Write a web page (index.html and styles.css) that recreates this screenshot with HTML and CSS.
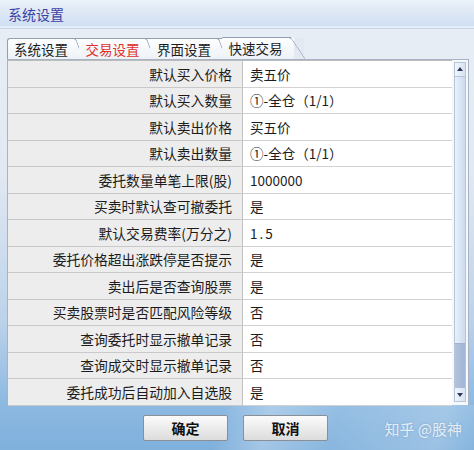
FILE: index.html
```html
<!DOCTYPE html>
<html lang="zh-CN">

<head>
    <meta charset="UTF-8">
    <title>系统设置</title>
    <link rel="stylesheet" href="styles.css">
</head>

<body>
    <div class="titlebar">系统设置</div>

    <div class="tabbar">
        <div class="tab first">系统设置</div>
        <div class="tab active">交易设置</div>
        <div class="tab">界面设置</div>
        <div class="tab last">快速交易</div>
    </div>

    <div class="sheet">
        <div class="grid">
            <div class="label">默认买入价格</div>
            <div class="value">卖五价</div>
            <div class="label">默认买入数量</div>
            <div class="value">①-全仓（1/1）</div>
            <div class="label">默认卖出价格</div>
            <div class="value">买五价</div>
            <div class="label">默认卖出数量</div>
            <div class="value">①-全仓（1/1）</div>
            <div class="label">委托数量单笔上限(股)</div>
            <div class="value">1000000</div>
            <div class="label">买卖时默认查可撤委托</div>
            <div class="value">是</div>
            <div class="label">默认交易费率(万分之)</div>
            <div class="value num">1.5</div>
            <div class="label">委托价格超出涨跌停是否提示</div>
            <div class="value">是</div>
            <div class="label">卖出后是否查询股票</div>
            <div class="value">是</div>
            <div class="label">买卖股票时是否匹配风险等级</div>
            <div class="value">否</div>
            <div class="label">查询委托时显示撤单记录</div>
            <div class="value">否</div>
            <div class="label">查询成交时显示撤单记录</div>
            <div class="value">否</div>
            <div class="label">委托成功后自动加入自选股</div>
            <div class="value">是</div>
        </div>

        <div class="scrollbar">
            <div class="arrow up"></div>
            <div class="thumb"></div>
            <div class="track"></div>
            <div class="arrow down"></div>
        </div>
    </div>

    <div class="footer">
        <button class="btn">确定</button>
        <button class="btn">取消</button>
        <span class="watermark">知乎 @股神</span>
    </div>
</body>

</html>
```

FILE: styles.css
```css
* {
    box-sizing: border-box;
}

body {
    position: relative;
    width: 474px;
    height: 450px;
    margin: 0;
    overflow: hidden;
    font-family: "Noto Sans CJK SC", sans-serif;
    color: #1c1c1c;
    background: linear-gradient(180deg, #e8eef5 0, #e2e9f2 170px, #bcd2ea 320px, #8cb9e1 405px, #7fb0dc 450px);
}

/* window caption */
.titlebar {
    display: flex;
    align-items: center;
    height: 29px;
    padding-left: 8px;
    font-size: 14px;
    color: #3a42a6;
    background: linear-gradient(180deg, #ebf2fa 0%, #dce7f5 50%, #d0e0f2 90%, #eef4fa 100%);
    border-bottom: 1px solid #c6d3e2;
}

/* tab strip */
.tabbar {
    display: flex;
    align-items: flex-end;
    height: 30px;
    padding-left: 7px;
}

.tab {
    position: relative;
    width: 71.5px;
    height: 21px;
    padding-left: 7px;
    font-size: 13.5px;
    line-height: 20px;
    white-space: nowrap;
    border-top: 1px solid #939fb1;
    background: linear-gradient(180deg, #fdfeff, #eef2f7);
}

/* slanted right edge of each tab, only the outline */
.tab::after {
    content: "";
    position: absolute;
    top: -1px;
    bottom: 0;
    right: 3px;
    width: 6px;
    border-top: 1px solid #939fb1;
    border-right: 1px solid #939fb1;
    border-top-right-radius: 3px;
    transform: skewX(20deg);
    transform-origin: top left;
}

.tab.first {
    padding-left: 6px;
    border-left: 1px solid #939fb1;
    border-top-left-radius: 3px;
}

.tab.active {
    color: #e0302c;
}

.tab.last {
    width: 82px;
    background: linear-gradient(90deg, rgba(238, 242, 247, 0) 72px, #e2e9f2 72px), linear-gradient(180deg, #fdfeff, #eef2f7);
    border-top: none;
}

.tab.last::before {
    content: "";
    position: absolute;
    top: -1px;
    left: 0;
    width: 69px;
    border-top: 1px solid #939fb1;
}

.tab.last::after {
    right: 13px;
    width: 6px;
    transform: skewX(34deg);
}

/* settings sheet */
.sheet {
    display: flex;
    gap: 2px;
    width: 462px;
    height: 346px;
    margin-left: 7px;
    padding-right: 2px;
    border: 1px solid #a7b3c4;
    border-bottom: none;
    background: #f6f8fb;
}

.grid {
    display: grid;
    grid-template-columns: 234px 210px;
    grid-auto-rows: 26.5px;
    align-content: start;
    width: 444px;
    border-top: 1px solid #bcbcbc;
}

.label,
.value {
    display: flex;
    align-items: center;
    font-size: 13.8px;
    white-space: nowrap;
}

.label {
    justify-content: flex-end;
    padding-right: 10px;
    background: #ededed;
    border-bottom: 1px solid #c9c9c9;
}

.value {
    padding-left: 7px;
    background: #fff;
    border-left: 1px solid #c2c2c2;
    border-bottom: 1px solid #d2d2d2;
    font-size: 13.5px;
}

.value.num {
    letter-spacing: 2px;
}

/* scroll bar */
.scrollbar {
    display: flex;
    flex-direction: column;
    width: 12px;
    height: 340px;
    margin-top: 2px;
    border: 1px solid #b7c5da;
    background: #dbe5f3;
}

.arrow {
    position: relative;
    height: 13px;
    background: linear-gradient(90deg, #f2f6fc, #d6e2f2);
}

.arrow::before {
    content: "";
    position: absolute;
    left: 2px;
    border-left: 3px solid transparent;
    border-right: 3px solid transparent;
}

.arrow.up::before {
    top: 4px;
    border-bottom: 4px solid #2c3a56;
}

.arrow.down::before {
    top: 5px;
    border-top: 4px solid #2c3a56;
}

.thumb {
    flex: 0 0 268px;
    border-top: 1px solid #b4c4dc;
    border-bottom: 1px solid #9fb1cf;
    background: linear-gradient(90deg, #e9f0fa, #cbdaef);
}

.track {
    flex: 1;
    background: linear-gradient(90deg, #b3c3de, #a3b5d4);
}

/* button row */
.footer {
    display: flex;
    justify-content: center;
    align-items: flex-start;
    gap: 15px;
    height: 45px;
    padding: 10px 3px 0 0;
    background: linear-gradient(105deg, rgba(255, 255, 255, 0) 0%, rgba(255, 255, 255, 0) 46%, rgba(255, 255, 255, 0.28) 56%, rgba(255, 255, 255, 0.08) 70%, rgba(255, 255, 255, 0.22) 92%, rgba(255, 255, 255, 0.05) 100%);
}

.btn {
    width: 85px;
    height: 26px;
    padding: 0;
    font-family: inherit;
    font-size: 14px;
    font-weight: bold;
    color: #111;
    border: 1px solid #8a8f96;
    border-radius: 2px;
    background: linear-gradient(180deg, #fbfbfb 0%, #ececec 50%, #dcdcdc 100%);
}

.watermark {
    position: absolute;
    right: 12px;
    bottom: 11px;
    font-size: 15px;
    color: rgba(255, 255, 255, 0.8);
    text-shadow: 0 0 2px rgba(90, 130, 170, 0.5);
}
```
